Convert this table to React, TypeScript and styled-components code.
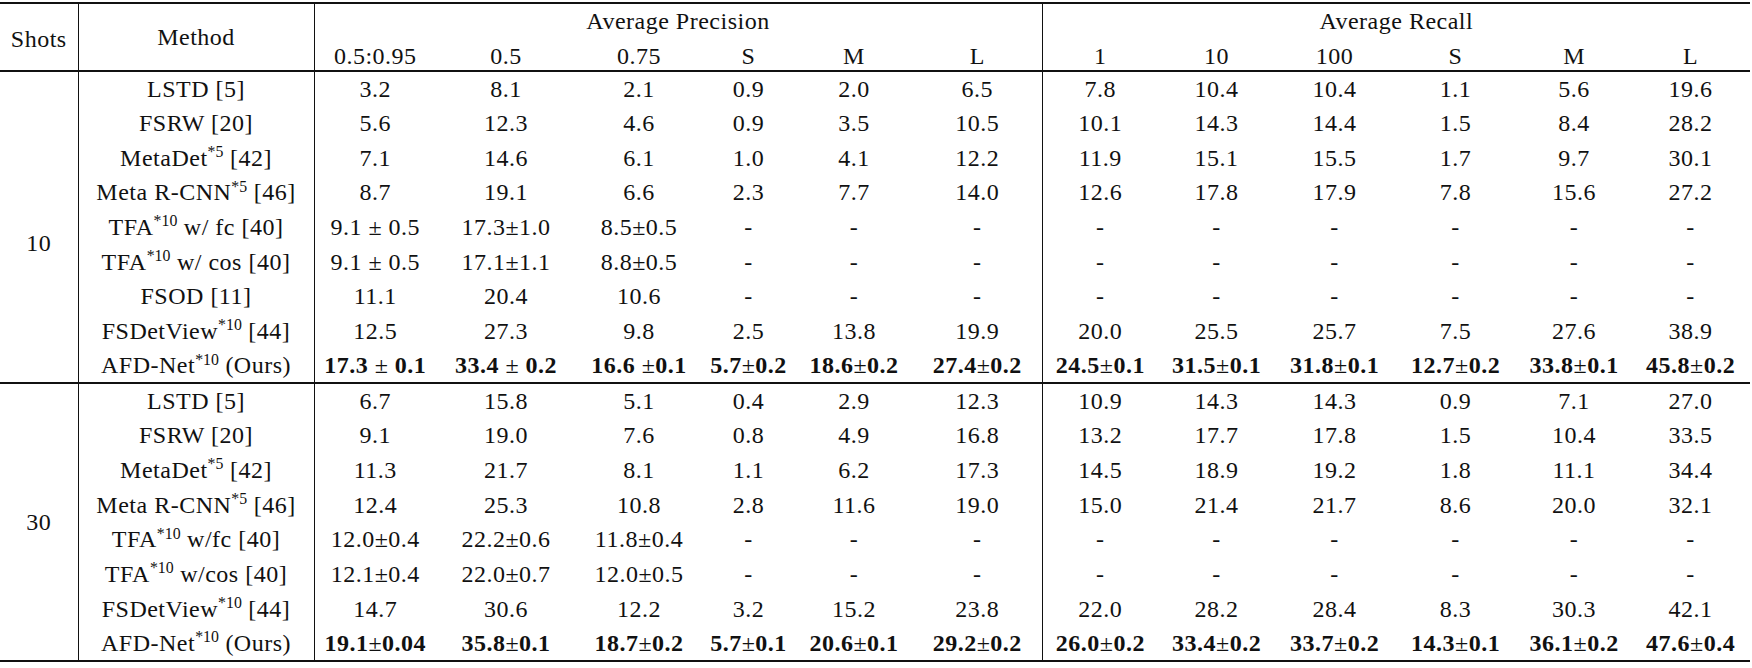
import React from "react";
import styled, { createGlobalStyle } from "styled-components";

const SERIF = `"Liberation Serif", "Times New Roman", serif`;

const GlobalStyle = createGlobalStyle`
  html, body {
    margin: 0;
    padding: 0;
    background: #fff;
    font-family: ${SERIF};
  }
`;

interface MethodRow {
  name: string;
  sup?: string;
  tail: string;
  values: string[];
  bold?: boolean;
}

interface ShotGroup {
  shots: string;
  rows: MethodRow[];
}

const COL_WIDTHS = [78, 236, 122, 140, 126, 93, 118, 129, 116, 117, 119, 123, 114, 119];
const AP_HEADERS = ["0.5:0.95", "0.5", "0.75", "S", "M", "L"];
const AR_HEADERS = ["1", "10", "100", "S", "M", "L"];

const dash = ["-", "-", "-", "-", "-", "-", "-", "-", "-"];

const groups: ShotGroup[] = [
  {
    shots: "10",
    rows: [
      { name: "LSTD", tail: " [5]", values: ["3.2", "8.1", "2.1", "0.9", "2.0", "6.5", "7.8", "10.4", "10.4", "1.1", "5.6", "19.6"] },
      { name: "FSRW", tail: " [20]", values: ["5.6", "12.3", "4.6", "0.9", "3.5", "10.5", "10.1", "14.3", "14.4", "1.5", "8.4", "28.2"] },
      { name: "MetaDet", sup: "*5", tail: " [42]", values: ["7.1", "14.6", "6.1", "1.0", "4.1", "12.2", "11.9", "15.1", "15.5", "1.7", "9.7", "30.1"] },
      { name: "Meta R-CNN", sup: "*5", tail: " [46]", values: ["8.7", "19.1", "6.6", "2.3", "7.7", "14.0", "12.6", "17.8", "17.9", "7.8", "15.6", "27.2"] },
      { name: "TFA", sup: "*10", tail: " w/ fc [40]", values: ["9.1 ± 0.5", "17.3±1.0", "8.5±0.5", ...dash] },
      { name: "TFA", sup: "*10", tail: " w/ cos [40]", values: ["9.1 ± 0.5", "17.1±1.1", "8.8±0.5", ...dash] },
      { name: "FSOD", tail: " [11]", values: ["11.1", "20.4", "10.6", ...dash] },
      { name: "FSDetView", sup: "*10", tail: " [44]", values: ["12.5", "27.3", "9.8", "2.5", "13.8", "19.9", "20.0", "25.5", "25.7", "7.5", "27.6", "38.9"] },
      {
        name: "AFD-Net",
        sup: "*10",
        tail: " (Ours)",
        bold: true,
        values: ["17.3 ± 0.1", "33.4 ± 0.2", "16.6 ±0.1", "5.7±0.2", "18.6±0.2", "27.4±0.2", "24.5±0.1", "31.5±0.1", "31.8±0.1", "12.7±0.2", "33.8±0.1", "45.8±0.2"],
      },
    ],
  },
  {
    shots: "30",
    rows: [
      { name: "LSTD", tail: " [5]", values: ["6.7", "15.8", "5.1", "0.4", "2.9", "12.3", "10.9", "14.3", "14.3", "0.9", "7.1", "27.0"] },
      { name: "FSRW", tail: " [20]", values: ["9.1", "19.0", "7.6", "0.8", "4.9", "16.8", "13.2", "17.7", "17.8", "1.5", "10.4", "33.5"] },
      { name: "MetaDet", sup: "*5", tail: " [42]", values: ["11.3", "21.7", "8.1", "1.1", "6.2", "17.3", "14.5", "18.9", "19.2", "1.8", "11.1", "34.4"] },
      { name: "Meta R-CNN", sup: "*5", tail: " [46]", values: ["12.4", "25.3", "10.8", "2.8", "11.6", "19.0", "15.0", "21.4", "21.7", "8.6", "20.0", "32.1"] },
      { name: "TFA", sup: "*10", tail: " w/fc [40]", values: ["12.0±0.4", "22.2±0.6", "11.8±0.4", ...dash] },
      { name: "TFA", sup: "*10", tail: " w/cos [40]", values: ["12.1±0.4", "22.0±0.7", "12.0±0.5", ...dash] },
      { name: "FSDetView", sup: "*10", tail: " [44]", values: ["14.7", "30.6", "12.2", "3.2", "15.2", "23.8", "22.0", "28.2", "28.4", "8.3", "30.3", "42.1"] },
      {
        name: "AFD-Net",
        sup: "*10",
        tail: " (Ours)",
        bold: true,
        values: ["19.1±0.04", "35.8±0.1", "18.7±0.2", "5.7±0.1", "20.6±0.1", "29.2±0.2", "26.0±0.2", "33.4±0.2", "33.7±0.2", "14.3±0.1", "36.1±0.2", "47.6±0.4"],
      },
    ],
  },
];

const Table = styled.table`
  margin-top: 2px;
  width: 1750px;
  table-layout: fixed;
  border-collapse: collapse;
  font-family: ${SERIF};
  font-size: 24px;
  letter-spacing: 0.5px;
  color: #111;
  border-top: 2px solid #111;
  border-bottom: 2px solid #111;
`;

const Col = styled.col<{ $w: number }>`
  width: ${(p) => p.$w}px;
`;

const HeadRow = styled.tr<{ $h: number; $last?: boolean }>`
  height: ${(p) => p.$h}px;
  border-bottom: ${(p) => (p.$last ? "2px solid #111" : "none")};
`;

const BodyRow = styled.tr<{ $last?: boolean }>`
  height: 34.7px;
  border-bottom: ${(p) => (p.$last ? "2px solid #111" : "none")};
`;

const Cell = styled.td<{ $divider?: boolean; $bold?: boolean; $pt?: number; $align?: string }>`
  padding: ${(p) => p.$pt ?? 0}px 4px 0 4px;
  text-align: center;
  vertical-align: ${(p) => p.$align ?? "middle"};
  white-space: nowrap;
  line-height: 28px;
  font-family: ${SERIF};
  font-weight: ${(p) => (p.$bold ? 700 : 400)};
  border-right: ${(p) => (p.$divider ? "1.5px solid #111" : "none")};
`;

const Sup = styled.sup`
  font-size: 0.66em;
  line-height: 0;
  vertical-align: 0;
  position: relative;
  top: -0.55em;
  letter-spacing: 0;
`;

const Pm = styled.span`
  font-weight: 400;
`;

const Value = ({ text }: { text: string }) => {
  const parts = text.split("±");
  if (parts.length === 1) return <>{text}</>;
  return (
    <>
      {parts[0]}
      <Pm>±</Pm>
      {parts[1]}
    </>
  );
};

const App = () => {
  return (
    <>
      <GlobalStyle />
      <Table>
        <colgroup>
          {COL_WIDTHS.map((w, i) => (
            <Col key={i} $w={w} />
          ))}
        </colgroup>
        <thead>
          <HeadRow $h={35}>
            <Cell as="th" rowSpan={2} $divider $pt={4} style={{ fontWeight: 400 }}>
              Shots
            </Cell>
            <Cell as="th" rowSpan={2} $divider style={{ fontWeight: 400 }}>
              Method
            </Cell>
            <Cell as="th" colSpan={6} $divider style={{ fontWeight: 400 }}>
              Average Precision
            </Cell>
            <Cell as="th" colSpan={6} style={{ fontWeight: 400 }}>
              Average Recall
            </Cell>
          </HeadRow>
          <HeadRow $h={33} $last>
            {AP_HEADERS.map((h, i) => (
              <Cell as="th" key={"ap" + i} $divider={i === 5} $align="bottom" style={{ fontWeight: 400 }}>
                {h}
              </Cell>
            ))}
            {AR_HEADERS.map((h, i) => (
              <Cell as="th" key={"ar" + i} $align="bottom" style={{ fontWeight: 400 }}>
                {h}
              </Cell>
            ))}
          </HeadRow>
        </thead>
        <tbody>
          {groups.map((g, gi) =>
            g.rows.map((r, ri) => (
              <BodyRow key={g.shots + ri} $last={ri === g.rows.length - 1 && gi < groups.length - 1}>
                {ri === 0 && (
                  <Cell rowSpan={g.rows.length} $divider $pt={gi === 0 ? 32 : 0}>
                    {g.shots}
                  </Cell>
                )}
                <Cell $divider>
                  {r.name}
                  {r.sup && <Sup>{r.sup}</Sup>}
                  {r.tail}
                </Cell>
                {r.values.map((v, vi) => (
                  <Cell key={vi} $bold={r.bold} $divider={vi === 5}>
                    <Value text={v} />
                  </Cell>
                ))}
              </BodyRow>
            ))
          )}
        </tbody>
      </Table>
    </>
  );
};

export default App;
